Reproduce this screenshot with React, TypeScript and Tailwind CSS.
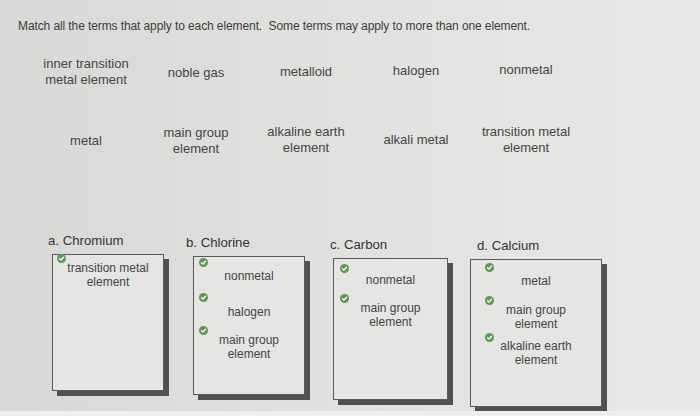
import React from 'react';

type Item = { text: string[]; mt: string; pt: string };

const termsTop: [string[], string][] = [
  [['inner transition', 'metal element'], 'mt-0'],
  [['noble gas'], 'mt-px'],
  [['metalloid'], '-mt-px'],
  [['halogen'], '-mt-[3px]'],
  [['nonmetal'], '-mt-[5px]'],
];

const termsBottom: [string[], string][] = [
  [['metal'], 'mt-px'],
  [['main group', 'element'], 'mt-px'],
  [['alkaline earth', 'element'], 'mt-0'],
  [['alkali metal'], 'mt-0'],
  [['transition metal', 'element'], 'mt-0'],
];

const elements: {
  label: string;
  col: string;
  box: string;
  check: string;
  items: Item[];
}[] = [
  {
    label: 'a. Chromium',
    col: 'w-[138px] mt-0',
    box: 'w-[112px] h-[137px] ml-[4px]',
    check: 'left-[4px]',
    items: [{ text: ['transition metal', 'element'], mt: '-mt-px', pt: 'pt-[7px]' }],
  },
  {
    label: 'b. Chlorine',
    col: 'w-[144px] mt-[2px]',
    box: 'w-[112px] h-[139px] ml-[7px]',
    check: 'left-[5px]',
    items: [
      { text: ['nonmetal'], mt: 'mt-px', pt: 'pt-[11px]' },
      { text: ['halogen'], mt: 'mt-[10px]', pt: 'pt-[12px]' },
      { text: ['main group', 'element'], mt: 'mt-[7px]', pt: 'pt-[7px]' },
    ],
  },
  {
    label: 'c. Carbon',
    col: 'w-[147px] mt-[4px]',
    box: 'w-[115px] h-[142px] ml-[3px]',
    check: 'left-[6px]',
    items: [
      { text: ['nonmetal'], mt: 'mt-[5px]', pt: 'pt-[9px]' },
      { text: ['main group', 'element'], mt: 'mt-[7px]', pt: 'pt-[7px]' },
    ],
  },
  {
    label: 'd. Calcium',
    col: 'w-[140px] mt-[5px]',
    box: 'w-[132px] h-[148px] -ml-[7px]',
    check: 'left-[14px]',
    items: [
      { text: ['metal'], mt: 'mt-[3px]', pt: 'pt-[11px]' },
      { text: ['main group', 'element'], mt: 'mt-[8px]', pt: 'pt-[7px]' },
      { text: ['alkaline earth', 'element'], mt: 'mt-[2px]', pt: 'pt-[6px]' },
    ],
  },
];

function Check() {
  return (
    <svg width="9" height="9" viewBox="0 0 10 10" className="block">
      <circle cx="5" cy="5" r="5" fill="#5b9a52" />
      <path d="M2.8 5.2 L4.4 6.7 L7.3 3.6" stroke="#ffffff" strokeWidth="1.5" fill="none" strokeLinecap="round" strokeLinejoin="round" />
    </svg>
  );
}

function Term({ lines, className = 'leading-[16px]' }: { lines: string[]; className?: string }) {
  return (
    <div className={`flex flex-col items-center justify-center text-center ${className}`}>
      {lines.map((l) => (
        <span key={l}>{l}</span>
      ))}
    </div>
  );
}

export default function App() {
  return (
    <div className="w-[700px] h-[416px] overflow-hidden bg-linear-to-r from-[#d8d9d7] via-[#e1e2e0] to-[#e8e9e7] text-[#444] flex flex-col font-['Liberation_Sans',Arial,sans-serif]">
      <p className="pl-[18px] pt-[19px] text-[12px] leading-[15px] text-[#3c3c3c] tracking-[-0.1px]">
        Match all the terms that apply to each element.&nbsp; Some terms may apply to more than one element.
      </p>

      {/* term bank */}
      <div className="pl-[31px] mt-[21px] text-[13px]">
        <div className="grid grid-cols-[110px_110px_110px_110px_110px] h-[34px]">
          {termsTop.map(([t, off]) => (
            <div key={t.join()} className={`flex justify-center ${off}`}>
              <Term lines={t} />
            </div>
          ))}
        </div>
        <div className="grid grid-cols-[110px_110px_110px_110px_110px] h-[34px] mt-[34px]">
          {termsBottom.map(([t, off]) => (
            <div key={t.join()} className={`flex justify-center ${off}`}>
              <Term lines={t} />
            </div>
          ))}
        </div>
      </div>

      {/* element boxes */}
      <div className="flex pl-[48px] mt-[76px]">
        {elements.map((el) => (
          <div key={el.label} className={`flex flex-col shrink-0 ${el.col}`}>
            <div className="text-[13.2px] text-[#333] leading-[16px] h-[16px]">{el.label}</div>
            <div className={`mt-[5px] border border-[#5a5a5a] bg-[#e5e6e4] shadow-[5px_5px_0_0_#505050] ${el.box}`}>
              <div className="flex flex-col text-[12px] text-[#444]">
                {el.items.map((it, i) => (
                  <div key={i} className={`relative ${it.mt}`}>
                    <div className={`absolute top-0 ${el.check}`}>
                      <Check />
                    </div>
                    <div className={it.pt}>
                      <Term lines={it.text} className="leading-[14px]" />
                    </div>
                  </div>
                ))}
              </div>
            </div>
          </div>
        ))}
      </div>

      <div className="mt-auto h-[5px] bg-[#efefed]" />
    </div>
  );
}
